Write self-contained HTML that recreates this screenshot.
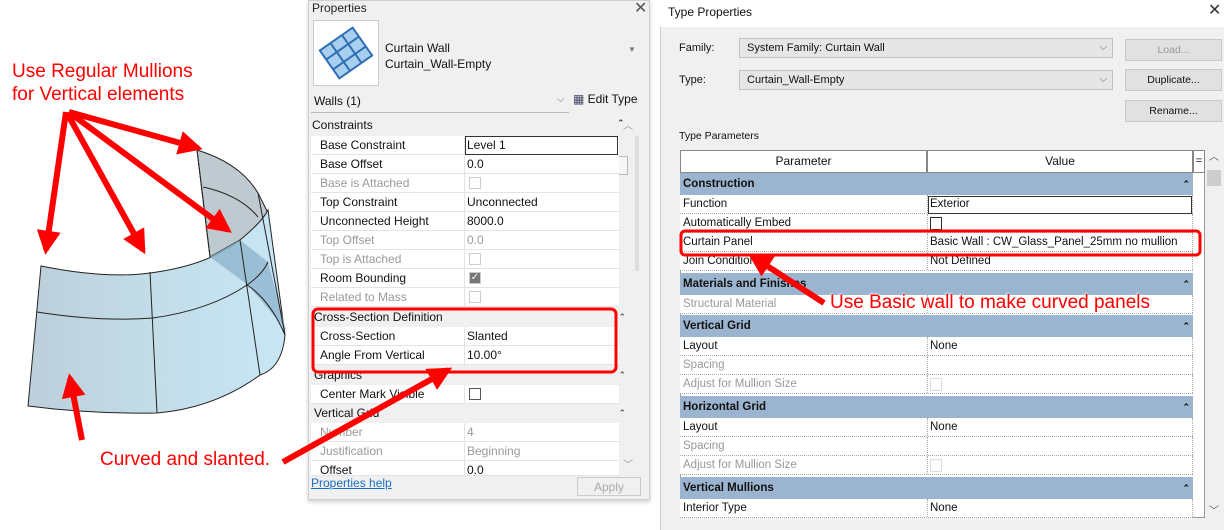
<!DOCTYPE html>
<html><head><meta charset="utf-8">
<style>
*{margin:0;padding:0;box-sizing:border-box}
body{width:1224px;height:530px;overflow:hidden;background:#fff;position:relative;font-family:"Liberation Sans",Arial,sans-serif;color:#111}
.a{position:absolute;white-space:nowrap}
#props{position:absolute;left:308px;top:0;width:342px;height:500px;background:#f0f0f0;border:1px solid #cfcfcf;box-shadow:0 2px 4px rgba(0,0,0,.2)}
.pr{position:absolute;left:2px;width:308px;height:19px;font-size:12px;line-height:19px;background:#fff;border-bottom:1px solid #e4e4e4}
.pr .l{position:absolute;left:9px}
.pr .v{position:absolute;left:156px}
.pr .s{position:absolute;left:153px;top:0;bottom:0;border-left:1px solid #e4e4e4}
.pr.g{background:#f0f0f0;border:none}
.pr.g .l{left:3px}
.dis{color:#999}
.cb{position:absolute;left:158px;top:3px;width:12px;height:12px;border:1px solid #ccc;background:#fff}
.gh{position:absolute;right:-7px;font-size:9px;color:#333}
#tp{position:absolute;left:660px;top:27px;width:564px;height:503px;background:#f0f0f0;border-left:1px solid #ccc}
.tr{position:absolute;left:680px;width:513px;height:19px;font-size:11.5px;line-height:19px;background:#fff;border-bottom:1px dotted #aaa}
.tr .l{position:absolute;left:3px}
.tr .v{position:absolute;left:250px}
.tr .s{position:absolute;left:247px;top:0;bottom:0;border-left:1px dotted #aaa}
.tr .e{position:absolute;left:512px;top:0;bottom:0;border-left:1px dotted #aaa}
.tr.g{background:#9bb4d0;font-weight:bold;height:22px;line-height:22px;border:none}
.tr.g .s,.tr.g .e{display:none}
.btn{position:absolute;left:1125px;width:97px;height:22px;border:1px solid #c9c9c9;background:#e1e1e1;font-size:10.5px;text-align:center;line-height:21px}
.combo{position:absolute;left:739px;width:374px;height:20px;border:1px solid #c2c2c2;background:#e6e6e6;font-size:11px;line-height:19px;padding-left:7px}
.combo:after{content:"⌵";position:absolute;right:5px;top:-1px;color:#666;font-size:10px}
.red{color:#f00;font-size:19px;text-shadow:1px 1px 2px #fff,-1px -1px 2px #fff}
</style></head><body>

<div class="a red" style="left:12px;top:60px;line-height:23px">Use Regular Mullions<br>for Vertical elements</div>
<div class="a red" style="left:100px;top:449px">Curved and slanted.</div>

<div id="props">
  <div class="a" style="left:3px;top:0;font-size:12px;color:#222">Properties</div>
  <div class="a" style="left:325px;top:-3px;font-size:16px;color:#555">✕</div>
  <div class="a" style="left:4px;top:19px;width:66px;height:66px;background:#fff;border:1px solid #ccc">
    <svg width="64" height="64" viewBox="0 0 64 64"><g transform="translate(32,32) rotate(-35)"><rect x="-20" y="-17" width="40" height="34" fill="#a8cfef" stroke="#2f6fb3" stroke-width="2"/><path d="M-7,-17V17M7,-17V17M-20,-6H20M-20,6H20" stroke="#2f6fb3" stroke-width="2"/></g></svg>
  </div>
  <div class="a" style="left:76px;top:39px;font-size:12px;line-height:16px">Curtain Wall<br>Curtain_Wall-Empty</div>
  <div class="a" style="left:319px;top:44px;font-size:8px;color:#777">▼</div>
  <div class="a" style="left:5px;top:93px;font-size:12px">Walls (1)</div>
  <div class="a" style="left:2px;top:111px;width:258px;border-top:1px solid #bbb"></div>
  <div class="a" style="left:248px;top:93px;font-size:10px;color:#777">⌵</div>
  <div class="a" style="left:264px;top:91px;font-size:12px"><span style="color:#446">▦</span> Edit Type</div>
  <div class="a" style="left:3px;top:117px;font-size:12px">Constraints</div>
  <div class="a" style="left:308px;top:117px;font-size:9px">⌃</div>
  <div class="a" style="left:310px;top:134px;width:16px;height:340px;background:#f0f0f0"></div>
  <div class="a" style="left:314px;top:116px;font-size:10px;color:#999">︿</div>
  <div class="a" style="left:314px;top:455px;font-size:10px;color:#999">﹀</div>
  <div class="a" style="left:308px;top:155px;width:11px;height:19px;border:1px solid #bbb;background:#f6f6f6"></div>
  <div class="a" style="left:326px;top:135px;width:4px;height:135px;background:#ddd"></div>

  <div class="pr" style="top:135px"><span class="l">Base Constraint</span><span class="s"></span><span style="position:absolute;left:154px;top:0;width:153px;height:19px;border:1px solid #333"></span><span class="v">Level 1</span></div>
  <div class="pr" style="top:154px"><span class="l">Base Offset</span><span class="s"></span><span class="v">0.0</span></div>
  <div class="pr dis" style="top:173px"><span class="l">Base is Attached</span><span class="s"></span><span class="cb"></span></div>
  <div class="pr" style="top:192px"><span class="l">Top Constraint</span><span class="s"></span><span class="v">Unconnected</span></div>
  <div class="pr" style="top:211px"><span class="l">Unconnected Height</span><span class="s"></span><span class="v">8000.0</span></div>
  <div class="pr dis" style="top:230px"><span class="l">Top Offset</span><span class="s"></span><span class="v">0.0</span></div>
  <div class="pr dis" style="top:249px"><span class="l">Top is Attached</span><span class="s"></span><span class="cb"></span></div>
  <div class="pr" style="top:268px"><span class="l">Room Bounding</span><span class="s"></span><span class="cb" style="background:#777;color:#fff;font-size:10px;line-height:10px;text-align:center">✓</span></div>
  <div class="pr dis" style="top:287px"><span class="l">Related to Mass</span><span class="s"></span><span class="cb"></span></div>
  <div class="pr g" style="top:307px"><span class="l">Cross-Section Definition</span><span class="gh">⌃</span></div>
  <div class="pr" style="top:326px"><span class="l">Cross-Section</span><span class="s"></span><span class="v">Slanted</span></div>
  <div class="pr" style="top:345px"><span class="l">Angle From Vertical</span><span class="s"></span><span class="v">10.00°</span></div>
  <div class="pr g" style="top:365px"><span class="l">Graphics</span><span class="gh">⌃</span></div>
  <div class="pr" style="top:384px"><span class="l">Center Mark Visible</span><span class="s"></span><span class="cb" style="border-color:#555"></span></div>
  <div class="pr g" style="top:403px"><span class="l">Vertical Grid</span><span class="gh">⌃</span></div>
  <div class="pr dis" style="top:422px"><span class="l">Number</span><span class="s"></span><span class="v">4</span></div>
  <div class="pr dis" style="top:441px"><span class="l">Justification</span><span class="s"></span><span class="v">Beginning</span></div>
  <div class="pr" style="top:460px;height:15px"><span class="l">Offset</span><span class="s"></span><span class="v">0.0</span></div>
  <div class="a" style="left:2px;top:475px;font-size:12px;color:#1a6fc4;text-decoration:underline">Properties help</div>
  <div class="a" style="left:268px;top:476px;width:64px;height:19px;border:1px solid #ccc;font-size:12px;line-height:18px;text-align:center;color:#aaa">Apply</div>
</div>

<div class="a" style="left:668px;top:5px;font-size:12px">Type Properties</div>
<div class="a" style="left:1208px;top:0px;font-size:16px;color:#333">✕</div>
<div id="tp"></div>
<div class="a" style="left:679px;top:42px;font-size:11px">Family:</div>
<div class="a" style="left:679px;top:74px;font-size:11px">Type:</div>
<div class="combo" style="top:38px">System Family: Curtain Wall</div>
<div class="combo" style="top:70px">Curtain_Wall-Empty</div>
<div class="btn" style="top:39px;color:#999">Load...</div>
<div class="btn" style="top:69px">Duplicate...</div>
<div class="btn" style="top:100px">Rename...</div>
<div class="a" style="left:679px;top:130px;font-size:10.5px">Type Parameters</div>
<div class="a" style="left:680px;top:150px;width:525px;height:368px;background:#fff;border:1px solid #999"></div>
<div class="a" style="left:680px;top:150px;width:247px;height:23px;border:1px solid #888;background:#fff;font-size:12px;text-align:center;line-height:21px">Parameter</div>
<div class="a" style="left:927px;top:150px;width:266px;height:23px;border:1px solid #888;background:#fff;font-size:12px;text-align:center;line-height:21px">Value</div>
<div class="a" style="left:1193px;top:150px;width:12px;height:23px;border:1px solid #888;background:#fff;font-size:11px;text-align:center;line-height:21px">=</div>
<div class="a" style="left:1206px;top:150px;width:16px;height:368px;background:#f0f0f0"></div>
<div class="a" style="left:1207px;top:170px;width:14px;height:16px;background:#cdcdcd"></div>
<div class="a" style="left:1209px;top:148px;font-size:10px;color:#555">︿</div>
<div class="a" style="left:1209px;top:502px;font-size:10px;color:#555">﹀</div>

<div class="tr g" style="top:173px"><span class="l">Construction</span><span style="position:absolute;right:3px;font-size:9px">⌃</span></div>
<div class="tr" style="top:195px"><span class="l">Function</span><span class="s"></span><span style="position:absolute;left:248px;top:1px;width:264px;height:18px;border:1px solid #333"></span><span class="v">Exterior</span><span class="e"></span></div>
<div class="tr" style="top:214px"><span class="l">Automatically Embed</span><span class="s"></span><span style="position:absolute;left:250px;top:3px;width:12px;height:13px;border:1px solid #333"></span><span class="e"></span></div>
<div class="tr" style="top:233px"><span class="l">Curtain Panel</span><span class="s"></span><span class="v">Basic Wall : CW_Glass_Panel_25mm no mullion</span><span class="e"></span></div>
<div class="tr" style="top:252px"><span class="l">Join Condition</span><span class="s"></span><span class="v">Not Defined</span><span class="e"></span></div>
<div class="tr g" style="top:273px"><span class="l">Materials and Finishes</span><span style="position:absolute;right:3px;font-size:9px">⌃</span></div>
<div class="tr dis" style="top:295px"><span class="l">Structural Material</span><span class="s"></span><span class="e"></span></div>
<div class="tr g" style="top:315px"><span class="l">Vertical Grid</span><span style="position:absolute;right:3px;font-size:9px">⌃</span></div>
<div class="tr" style="top:337px"><span class="l">Layout</span><span class="s"></span><span class="v">None</span><span class="e"></span></div>
<div class="tr dis" style="top:356px"><span class="l">Spacing</span><span class="s"></span><span class="e"></span></div>
<div class="tr dis" style="top:375px"><span class="l">Adjust for Mullion Size</span><span class="s"></span><span style="position:absolute;left:250px;top:3px;width:12px;height:13px;border:1px solid #ddd"></span><span class="e"></span></div>
<div class="tr g" style="top:396px"><span class="l">Horizontal Grid</span><span style="position:absolute;right:3px;font-size:9px">⌃</span></div>
<div class="tr" style="top:418px"><span class="l">Layout</span><span class="s"></span><span class="v">None</span><span class="e"></span></div>
<div class="tr dis" style="top:437px"><span class="l">Spacing</span><span class="s"></span><span class="e"></span></div>
<div class="tr dis" style="top:456px"><span class="l">Adjust for Mullion Size</span><span class="s"></span><span style="position:absolute;left:250px;top:3px;width:12px;height:13px;border:1px solid #ddd"></span><span class="e"></span></div>
<div class="tr g" style="top:477px"><span class="l">Vertical Mullions</span><span style="position:absolute;right:3px;font-size:9px">⌃</span></div>
<div class="tr" style="top:499px"><span class="l">Interior Type</span><span class="s"></span><span class="v">None</span><span class="e"></span></div>

<div class="a red" style="left:830px;top:292px">Use Basic wall to make curved panels</div>

<svg class="a" style="left:0;top:0" width="1224" height="530" viewBox="0 0 1224 530">
  <defs>
    <linearGradient id="fg" x1="0" x2="1"><stop offset="0" stop-color="#bccfdb"/><stop offset="0.5" stop-color="#c3dde9"/><stop offset="1" stop-color="#c8e6f5"/></linearGradient>
    <marker id="ah" viewBox="0 0 10 10" refX="8" refY="5" markerWidth="5" markerHeight="4" orient="auto" markerUnits="strokeWidth"><path d="M0,0L10,5L0,10Z" fill="#f00"/></marker>
  </defs>
  <path d="M197,150 Q240,163 258,193 L268,213 Q255,232 240,240 L210,257 Z" fill="#bfc9d0" stroke="#222" stroke-width="1"/>
  <path d="M41,266 Q110,280 157,272 Q210,264 240,240 Q262,222 268,210 L285,335 Q282,368 260,375 Q215,408 157,413 Q90,414 28,406 Z" fill="url(#fg)" stroke="#222" stroke-width="1"/>
  <path d="M210,257 L240,240 L268,262 L286,330 L248,285 Z" fill="#92b9d0" opacity=".85"/>
  <path d="M197,150 L210,257 M203,187 Q240,195 258,217 M37,312 Q100,322 153,318 Q210,310 247,285 Q262,275 268,262 M150,272 L157,413 M240,240 L260,375 M258,193 L285,335 M247,285 Q270,300 285,335" fill="none" stroke="#222" stroke-width="1"/>
  <g stroke="#f00" stroke-width="6" fill="none" marker-end="url(#ah)">
    <line x1="66" y1="112" x2="46" y2="250"/>
    <line x1="67" y1="113" x2="143" y2="250"/>
    <line x1="69" y1="112" x2="198" y2="148"/>
    <line x1="70" y1="113" x2="228" y2="230"/>
    <line x1="82" y1="440" x2="70" y2="378"/>
    <line x1="283" y1="462" x2="448" y2="370"/>
    <line x1="824" y1="303" x2="752" y2="256"/>
  </g>
  <rect x="313" y="309" width="303" height="63" rx="5" fill="none" stroke="#f00" stroke-width="3"/>
  <rect x="681" y="231" width="519" height="24" rx="4" fill="none" stroke="#f00" stroke-width="3"/>
</svg>
</body></html>
